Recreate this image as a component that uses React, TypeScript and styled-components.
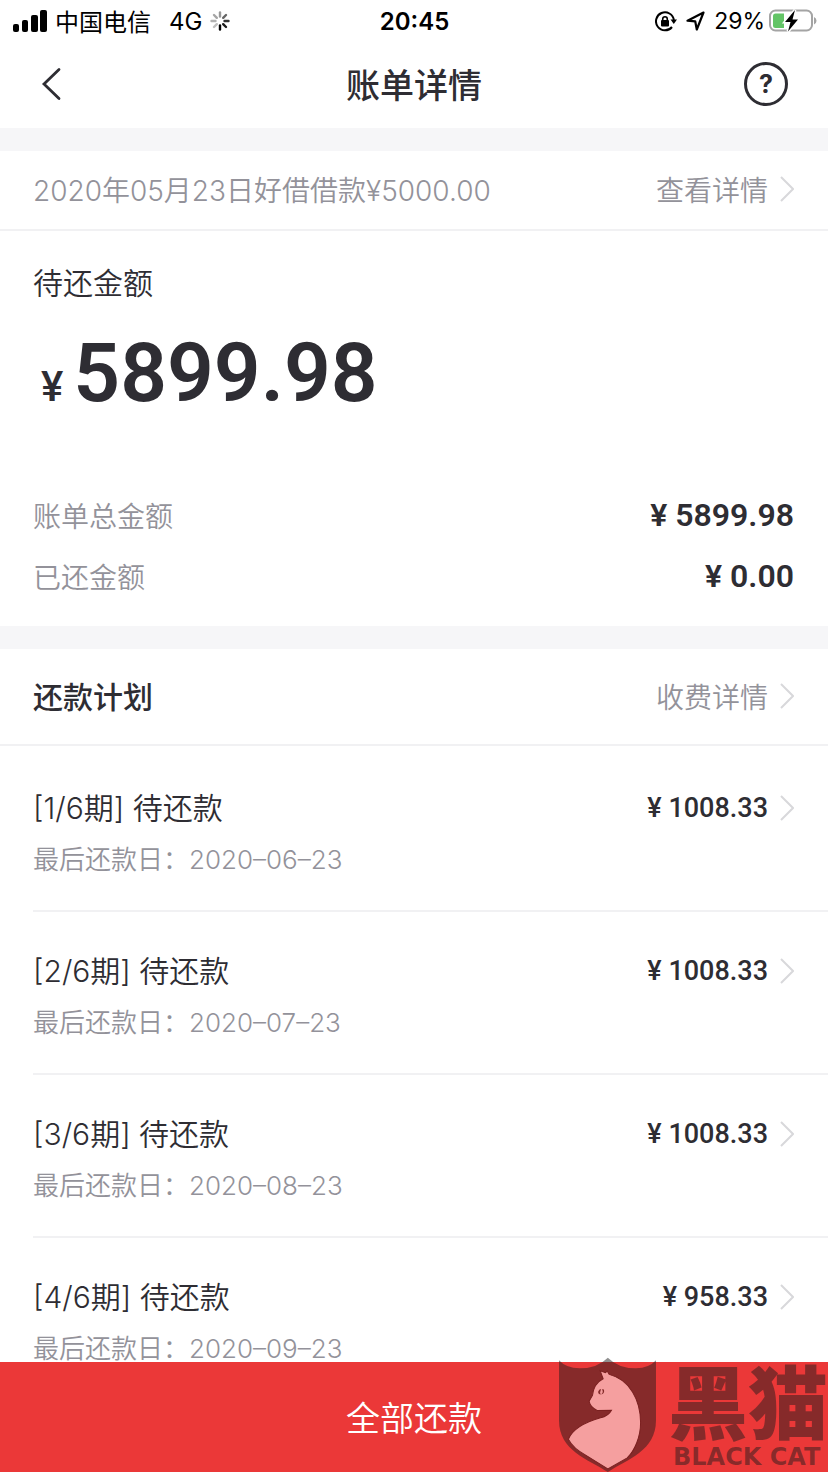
import React from "react";
import styled, { createGlobalStyle } from "styled-components";

const LATIN = `Inter, "Noto Sans CJK SC", sans-serif`;
const CJK = `"Noto Sans CJK SC", sans-serif`;
const FIGURES = `Roboto, "Noto Sans CJK SC", sans-serif`;
const INK = "#2e2d33";
const MUTED = "#93929a";

const GlobalStyle = createGlobalStyle`
  * { box-sizing: border-box; }
  body { margin: 0; background: #fff; color: ${INK}; font-family: ${LATIN}; font-weight: 350; }
  h1, h2, p, dl, dd, dt, ul { margin: 0; padding: 0; font-weight: inherit; }
  ul { list-style: none; }
  button { border: 0; padding: 0; background: none; color: inherit; font: inherit; cursor: pointer; }
  a { color: inherit; text-decoration: none; }
  svg { display: block; flex: none; }
`;

const Screen = styled.div`
  display: flex;
  flex-direction: column;
  height: 100vh;
`;

const StatusBar = styled.div`
  display: grid;
  grid-template-columns: 1fr auto 1fr;
  align-items: center;
  height: 42px;
  padding: 0 11px 0 12px;
  color: #000;
  font-size: 24px;
  font-weight: 400;
`;

const StatusGroup = styled.div<{ $end?: boolean }>`
  display: flex;
  align-items: center;
  justify-content: ${(p) => (p.$end ? "flex-end" : "flex-start")};
  gap: ${(p) => (p.$end ? 9 : 8)}px;
`;

const Carrier = styled.span`
  margin-right: 10px;
  padding-bottom: 2px;
`;

const Clock = styled.time`
  font-size: 24px;
  font-weight: 600;
`;

const Battery = styled.div`
  display: flex;
  align-items: center;
  gap: 4px;
  font-size: 23px;
`;

const NavBar = styled.header`
  display: grid;
  grid-template-columns: 1fr auto 1fr;
  align-items: center;
  height: 86px;
  padding: 0 40px 2px;
`;

const NavTitle = styled.h1`
  font: 500 34px/50px ${CJK};
`;

const IconButton = styled.button<{ $end?: boolean }>`
  justify-self: ${(p) => (p.$end ? "end" : "start")};
`;

const HelpButton = styled(IconButton)`
  width: 44px;
  height: 44px;
  border: 3px solid ${INK};
  border-radius: 50%;
  font: 700 25px/38px ${LATIN};
`;

const Content = styled.main`
  flex: 1;
  min-height: 0;
  overflow-y: auto;
  scrollbar-width: none;
`;

const Panel = styled.section`
  border-top: 23px solid #f6f6f8;
`;

const PanelHeader = styled.div<{ $tall?: boolean }>`
  display: flex;
  align-items: center;
  justify-content: space-between;
  height: ${(p) => (p.$tall ? 97 : 80)}px;
  padding: 0 34px 2px 33px;
  border-bottom: 2px solid #f1f1f3;
`;

const LoanName = styled.p`
  color: ${MUTED};
  font-size: 28px;
`;

const PlanTitle = styled.h2`
  padding-bottom: 2px;
  font: 500 30px/44px ${CJK};
`;

const MoreLink = styled.a`
  display: flex;
  align-items: center;
  gap: 12px;
  color: ${MUTED};
  font-size: 28px;
`;

const Summary = styled.div`
  padding: 28px 34px 20px 33px;
`;

const SummaryLabel = styled.p`
  font: 350 30px/44px ${CJK};
`;

const BigAmount = styled.p`
  display: flex;
  align-items: baseline;
  gap: 10px;
  padding-left: 8px;
  margin: 22px 0 49px;
  font: 600 82px/96px ${FIGURES};
`;

const BigCurrency = styled.span`
  font-size: 42px;
  font-weight: 500;
`;

const TotalRow = styled.div`
  display: flex;
  align-items: center;
  justify-content: space-between;
  height: 61px;
`;

const TotalLabel = styled.dt`
  color: ${MUTED};
  font-size: 28px;
`;

const TotalValue = styled.dd`
  font: 600 32px/44px ${FIGURES};
`;

const PlanList = styled.ul`
  padding: 3px 0 0 33px;
`;

const PlanItem = styled.li`
  height: 163px;
  padding: 35px 34px 0 0;
  border-bottom: 2px solid #f1f1f3;
`;

const PlanLine = styled.a`
  display: flex;
  align-items: center;
  justify-content: space-between;
  height: 48px;
`;

const PlanName = styled.span`
  padding-bottom: 4px;
  font-size: 30px;
`;

const PlanAmount = styled.span`
  display: flex;
  align-items: center;
  gap: 12px;
  font: 500 27px/44px ${FIGURES};
`;

const DueDate = styled.p`
  margin-top: 4px;
  color: ${MUTED};
  font-size: 26px;
  line-height: 48px;
`;

const Footer = styled.footer`
  position: relative;
  background: #eb3838;
`;

const PayButton = styled.button`
  display: block;
  width: 100%;
  height: 110px;
  color: #fff;
  font: 350 34px/50px ${CJK};
`;

const Watermark = styled.div`
  position: absolute;
  right: 0;
  bottom: 0;
  display: flex;
  align-items: flex-end;
  gap: 12px;
  color: rgba(28, 28, 28, 0.49);
  pointer-events: none;
`;

const BrandText = styled.div`
  display: flex;
  flex-direction: column;
  gap: 8px;
`;

const BrandName = styled.span`
  font: 900 80px/72px ${CJK};
`;

const BrandLatin = styled.span`
  padding-left: 5px;
  font: 700 24px/30px "DejaVu Sans", sans-serif;
`;

const Chevron = () => (
  <svg width="14" height="26" viewBox="0 0 14 26" fill="none" stroke="#d8d8db" strokeWidth="2">
    <path d="M1 1l12 12L1 25" />
  </svg>
);

const SignalIcon = () => (
  <svg width="35" height="22" viewBox="0 0 35 22">
    <rect x="1" y="14" width="6" height="8" rx="2" />
    <rect x="10" y="10" width="6" height="12" rx="2" />
    <rect x="19" y="5" width="7" height="17" rx="2" />
    <rect x="28" y="0" width="7" height="22" rx="2" />
  </svg>
);

const SPOKES = [0.4, 0.6, 0.8, 0.9, 1, 0.25, 0.3, 0.35];

const SpinnerIcon = () => (
  <svg width="20" height="20" viewBox="-10 -10 20 20" stroke="#000" strokeWidth="2.4" strokeLinecap="round">
    {SPOKES.map((o, i) => (
      <line key={i} y1="-4.500" y2="-8.500" opacity={o} transform={`rotate(${i * 45})`} />
    ))}
  </svg>
);

const LockIcon = () => (
  <svg width="22" height="21" viewBox="0 0 22 21">
    <path d="M18.900 9A9 9 0 1 0 17 16" fill="none" stroke="#000" strokeWidth="2" />
    <path d="M15.500 8.500H22l-3.200 4.500z" />
    <rect x="6" y="9" width="8" height="6.500" rx="1" />
    <path d="M7.700 9.500V8a2.300 2.300 0 0 1 4.600 0v1.500" fill="none" stroke="#000" strokeWidth="1.600" />
  </svg>
);

const LocationIcon = () => (
  <svg width="19" height="20" viewBox="0 0 19 20" fill="none" stroke="#000" strokeWidth="2.200" strokeLinejoin="round">
    <path d="M17.500 1.500L1.500 9.700l7.700.6L10.800 18.500z" />
  </svg>
);

const BatteryIcon = () => (
  <svg width="48" height="24" viewBox="0 0 48 24">
    <rect x="1" y="1.500" width="42" height="20" rx="5.500" fill="none" stroke="#a4a4a4" strokeWidth="2" />
    <path d="M45 8v7.500q2.500-1 2.500-3.750T45 8z" fill="#a4a4a4" />
    <path d="M6.500 4.500H15V19H6.500Q4 19 4 16.500V7q0-2.500 2.500-2.500z" fill="#63c466" />
    <path
      d="M26 1L16 13h5.500L19 22.500L29 10.500h-5.500z"
      fill="#000"
      stroke="#fff"
      strokeWidth="3"
      paintOrder="stroke"
    />
  </svg>
);

const ShieldLogo = () => (
  <svg width="97" height="115" viewBox="58 50 290 344">
    <path
      fill="currentColor"
      d="M58 60Q78 83 120 84Q172 84 204 52Q236 84 288 84Q328 83 348 60V240C348 330 264 356 204 394C144 356 58 330 58 240Z"
    />
    <path
      fill="#f59f9f"
      stroke="#7a2020"
      strokeWidth="3"
      d="M181 91L197 97L202 92L208 102C270 118 302 180 302 246C302 290 284 330 262 352L204 385L140 345C112 330 96 316 86 296C100 262 140 244 182 232C198 228 208 222 215 209L172 210C160 204 150 194 148 182L158 165C160 145 168 126 190 115Z"
    />
    <path fill="#852b2b" d="M175 154q2-8 9-8l-2 6q-3 5 1 10q-8 0-8-8zM187 146q7 0 6 6q0 9-9 10q5-4 5-8z" />
  </svg>
);

const plans = [
  { no: 1, date: "2020–06–23", amount: "1008.33" },
  { no: 2, date: "2020–07–23", amount: "1008.33" },
  { no: 3, date: "2020–08–23", amount: "1008.33" },
  { no: 4, date: "2020–09–23", amount: "958.33" },
];

export default function App() {
  return (
    <Screen>
      <GlobalStyle />
      <StatusBar>
        <StatusGroup>
          <SignalIcon />
          <Carrier>中国电信</Carrier>
          <span>4G</span>
          <SpinnerIcon />
        </StatusGroup>
        <Clock>20:45</Clock>
        <StatusGroup $end>
          <LockIcon />
          <LocationIcon />
          <Battery>
            <span>29%</span>
            <BatteryIcon />
          </Battery>
        </StatusGroup>
      </StatusBar>
      <NavBar>
        <IconButton aria-label="返回">
          <svg width="22" height="34" viewBox="0 0 22 34" fill="none" stroke={INK} strokeWidth="2.800" strokeLinecap="round">
            <path d="M19 2.500L4 17l15 14.500" />
          </svg>
        </IconButton>
        <NavTitle>账单详情</NavTitle>
        <HelpButton $end>?</HelpButton>
      </NavBar>
      <Content>
        <Panel>
          <PanelHeader>
            <LoanName>2020年05月23日好借借款¥5000.00</LoanName>
            <MoreLink href="#loan">
              查看详情
              <Chevron />
            </MoreLink>
          </PanelHeader>
          <Summary>
            <SummaryLabel>待还金额</SummaryLabel>
            <BigAmount>
              <BigCurrency>¥</BigCurrency>
              5899.98
            </BigAmount>
            <dl>
              <TotalRow>
                <TotalLabel>账单总金额</TotalLabel>
                <TotalValue>¥ 5899.98</TotalValue>
              </TotalRow>
              <TotalRow>
                <TotalLabel>已还金额</TotalLabel>
                <TotalValue>¥ 0.00</TotalValue>
              </TotalRow>
            </dl>
          </Summary>
        </Panel>
        <Panel>
          <PanelHeader $tall>
            <PlanTitle>还款计划</PlanTitle>
            <MoreLink href="#fees">
              收费详情
              <Chevron />
            </MoreLink>
          </PanelHeader>
          <PlanList>
            {plans.map((p) => (
              <PlanItem key={p.no}>
                <PlanLine href={`#plan-${p.no}`}>
                  <PlanName>[{p.no}/6期] 待还款</PlanName>
                  <PlanAmount>
                    ¥ {p.amount}
                    <Chevron />
                  </PlanAmount>
                </PlanLine>
                <DueDate>最后还款日：{p.date}</DueDate>
              </PlanItem>
            ))}
          </PlanList>
        </Panel>
      </Content>
      <Footer>
        <PayButton>全部还款</PayButton>
        <Watermark>
          <ShieldLogo />
          <BrandText>
            <BrandName>黑猫</BrandName>
            <BrandLatin>BLACK CAT</BrandLatin>
          </BrandText>
        </Watermark>
      </Footer>
    </Screen>
  );
}
